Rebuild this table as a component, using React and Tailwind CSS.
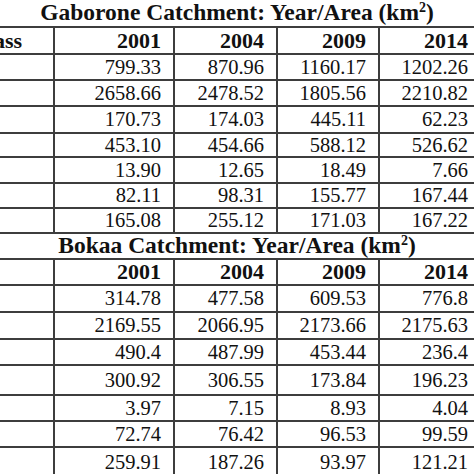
const years = ['2001', '2004', '2009', '2014']

const sections = [
  {
    name: 'Gaborone',
    titleH: 'h-[27px]',
    headH: 'h-[27px]',
    label: 'Class',
    rows: [
      { h: 'h-[26px]', v: ['799.33', '870.96', '1160.17', '1202.26'] },
      { h: 'h-[26px]', v: ['2658.66', '2478.52', '1805.56', '2210.82'] },
      { h: 'h-[27px]', v: ['170.73', '174.03', '445.11', '62.23'] },
      { h: 'h-[24px]', v: ['453.10', '454.66', '588.12', '526.62'] },
      { h: 'h-[26px]', v: ['13.90', '12.65', '18.49', '7.66'] },
      { h: 'h-[25px]', v: ['82.11', '98.31', '155.77', '167.44'] },
      { h: 'h-[25px]', v: ['165.08', '255.12', '171.03', '167.22'] },
    ],
  },
  {
    name: 'Bokaa',
    titleH: 'h-[26px]',
    headH: 'h-[26px]',
    label: '',
    rows: [
      { h: 'h-[27px]', v: ['314.78', '477.58', '609.53', '776.8'] },
      { h: 'h-[27px]', v: ['2169.55', '2066.95', '2173.66', '2175.63'] },
      { h: 'h-[26px]', v: ['490.4', '487.99', '453.44', '236.4'] },
      { h: 'h-[30px]', v: ['300.92', '306.55', '173.84', '196.23'] },
      { h: 'h-[26px]', v: ['3.97', '7.15', '8.93', '4.04'] },
      { h: 'h-[26px]', v: ['72.74', '76.42', '96.53', '99.59'] },
      { h: 'h-[30px]', v: ['259.91', '187.26', '93.97', '121.21'] },
    ],
  },
]

function Section({ s, first }) {
  return (
    <>
      <tr className={s.titleH}>
        <td
          colSpan={5}
          className={`${first ? '' : 'border-t-2'} border-b-2 border-[#3d3d3d] pl-[59px] p-0 text-center text-[23.5px] font-bold leading-none`}
        >
          {s.name} Catchment: Year/Area (km<sup className="text-[14px] top-[-0.6em]">2</sup>)
        </td>
      </tr>
      <tr className={s.headH}>
        <td className="border-2 border-l-0 border-[#3d3d3d] p-0 pl-[38px] text-left text-[22px] font-bold leading-none">
          {s.label}
        </td>
        {years.map((y) => (
          <td
            key={y}
            className="border-2 border-[#3d3d3d] p-0 pr-3 text-right text-[22px] font-bold leading-none"
          >
            {y}
          </td>
        ))}
      </tr>
      {s.rows.map((r, i) => (
        <tr key={i} className={r.h}>
          <td className="border-2 border-l-0 border-[#3d3d3d] p-0" />
          {r.v.map((v, j) => (
            <td
              key={j}
              className="border-2 border-[#3d3d3d] p-0 pr-3 text-right text-[20.5px] leading-none"
            >
              {v}
            </td>
          ))}
        </tr>
      ))}
    </>
  )
}

export default function App() {
  return (
    <div className="w-[474px] h-[474px] overflow-hidden bg-white text-[#111] font-['Liberation_Serif','Times_New_Roman',serif]">
      <table className="ml-[-66px] w-[547px] table-fixed border-collapse">
        <colgroup>
          <col className="w-[120px]" />
          <col className="w-[120px]" />
          <col className="w-[103px]" />
          <col className="w-[102px]" />
          <col className="w-[102px]" />
        </colgroup>
        <tbody>
          {sections.map((s, i) => (
            <Section key={s.name} s={s} first={i === 0} />
          ))}
        </tbody>
      </table>
    </div>
  )
}
